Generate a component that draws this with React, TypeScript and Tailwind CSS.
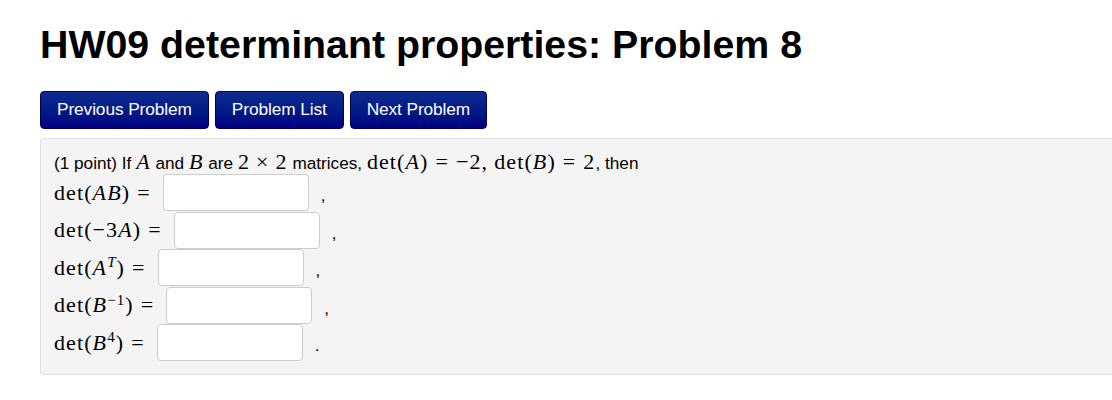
import React from "react";

const M = ({ children }: { children: React.ReactNode }) => (
  <span className="font-['Liberation_Serif',serif] text-[22px] tracking-[1.1px] leading-[22px]">{children}</span>
);
const I = ({ children }: { children: React.ReactNode }) => (
  <span className="italic">{children}</span>
);
const Eq = () => <span className="mx-[7px]">=</span>;

function Row({ label, end }: { label: React.ReactNode; end: string }) {
  return (
    <div className="flex items-center h-[37.5px]">
      <M>{label}</M>
      <div className="ml-[5px] w-[146px] h-[37px] bg-white border border-[#cccccc] rounded-[4px]" />
      <span className="ml-[12px] mt-[6px] text-[17px]">{end}</span>
    </div>
  );
}

export default function App() {
  return (
    <div className="font-['Liberation_Sans',Arial,sans-serif] text-black bg-white w-[1112px] h-[400px] overflow-hidden">
      <div className="pl-[40px] pt-[22px]">
        <h1 className="text-[39.3px] font-bold leading-[44px]">HW09 determinant properties: Problem 8</h1>
        <div className="flex gap-[6px] mt-[25px]">
          {["Previous Problem", "Problem List", "Next Problem"].map((t) => (
            <div
              key={t}
              className="h-[38px] px-[16px] flex items-center text-white text-[17.3px] tracking-[-0.1px] rounded-[4px] bg-gradient-to-b from-[#0f2b8f] to-[#000080] border border-[#00005a]"
            >
              {t}
            </div>
          ))}
        </div>
        <div className="mt-[9px] bg-[#f4f4f4] border-t border-b border-l border-[#e0e0e0] rounded-l-[4px] pl-[13px] pt-[12px] pb-[12px]">
          <div className="text-[17.2px] leading-[22px] flex items-baseline">
            <span>(1 point) If&nbsp;</span>
            <M><I>A</I></M>
            <span>&nbsp;and&nbsp;</span>
            <M><I>B</I></M>
            <span>&nbsp;are&nbsp;</span>
            <M>2<span className="mx-[6px]">×</span>2</M>
            <span>&nbsp;matrices,&nbsp;</span>
            <M>det(<I>A</I>)<Eq />−2,<span className="ml-[6px]">det(<I>B</I>)</span><Eq />2</M>
            <span>, then</span>
          </div>
          <Row label={<>det(<I>AB</I>)<Eq /></>} end="," />
          <Row label={<>det(−3<I>A</I>)<Eq /></>} end="," />
          <Row label={<>det(<I>A</I><sup className="text-[15px] italic">T</sup>)<Eq /></>} end="," />
          <Row label={<>det(<I>B</I><sup className="text-[15px]">−1</sup>)<Eq /></>} end="," />
          <Row label={<>det(<I>B</I><sup className="text-[15px]">4</sup>)<Eq /></>} end="." />
        </div>
      </div>
    </div>
  );
}
